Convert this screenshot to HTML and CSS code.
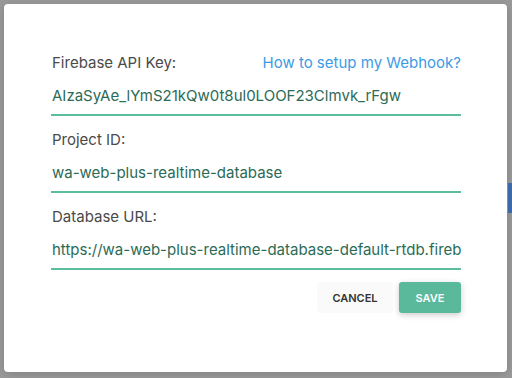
FILE: index.html
```html
<!DOCTYPE html>
<html lang="en">
<head>
<meta charset="UTF-8">
<meta name="viewport" content="width=device-width, initial-scale=1.0">
<title>Firebase Settings</title>
<link rel="stylesheet" href="styles.css">
</head>
<body>
  <div class="backdrop">
    <div class="side-tab"></div>
    <div class="modal">
      <div class="field">
        <div class="label-row">
          <label>Firebase API Key:</label>
          <a href="#" class="help-link">How to setup my Webhook?</a>
        </div>
        <input type="text" value="AIzaSyAe_lYmS21kQw0t8ul0LOOF23Clmvk_rFgw">
      </div>
      <div class="field">
        <div class="label-row">
          <label>Project ID:</label>
        </div>
        <input type="text" value="wa-web-plus-realtime-database">
      </div>
      <div class="field">
        <div class="label-row">
          <label>Database URL:</label>
        </div>
        <input type="text" value="https://wa-web-plus-realtime-database-default-rtdb.firebaseio.com">
      </div>
      <div class="actions">
        <button class="btn-cancel">Cancel</button>
        <button class="btn-save">Save</button>
      </div>
    </div>
  </div>
</body>
</html>
```

FILE: styles.css
```css
html, body {
  margin: 0;
  height: 100%;
}

body {
  font-family: Inter, "Liberation Sans", Arial, sans-serif;
  background-color: #999999;
  overflow: hidden;
}

.backdrop {
  position: relative;
  height: 100%;
  padding: 4px 5px 6px 4px;
  box-sizing: border-box;
}

.side-tab {
  position: absolute;
  right: 0;
  top: 183px;
  width: 4px;
  height: 30px;
  background: #3a6aa8;
}

.modal {
  background: #fff;
  border-radius: 4px;
  height: 100%;
  box-sizing: border-box;
  padding: 49px 46px 0 47px;
  box-shadow: 0 2px 10px rgba(0, 0, 0, 0.15);
}

.field {
  margin-bottom: 14px;
}

.label-row {
  display: flex;
  justify-content: space-between;
  line-height: 20px;
  font-size: 15px;
}

label {
  color: #4a4a4a;
  padding-left: 1px;
}

.help-link {
  color: #3d9be4;
  text-decoration: none;
}

input[type="text"] {
  display: block;
  width: 100%;
  box-sizing: border-box;
  border: none;
  border-bottom: 2px solid #5cbd9e;
  padding: 13px 0 8px 1px;
  font-family: inherit;
  font-size: 15px;
  line-height: 20px;
  color: #2b6b56;
  outline: none;
  background: transparent;
}

.actions {
  display: flex;
  justify-content: flex-end;
  gap: 6px;
  margin-top: -2px;
}

.actions button {
  height: 31px;
  border: none;
  border-radius: 3px;
  font-family: inherit;
  font-size: 11px;
  font-weight: 600;
  letter-spacing: 0;
  text-transform: uppercase;
  cursor: pointer;
}

.btn-cancel {
  width: 76px;
  background: #fafafa;
  color: #333;
}

.btn-save {
  width: 62px;
  background: #59b99a;
  color: #fff;
  box-shadow: 0 2px 6px rgba(0, 0, 0, 0.2);
}
```
